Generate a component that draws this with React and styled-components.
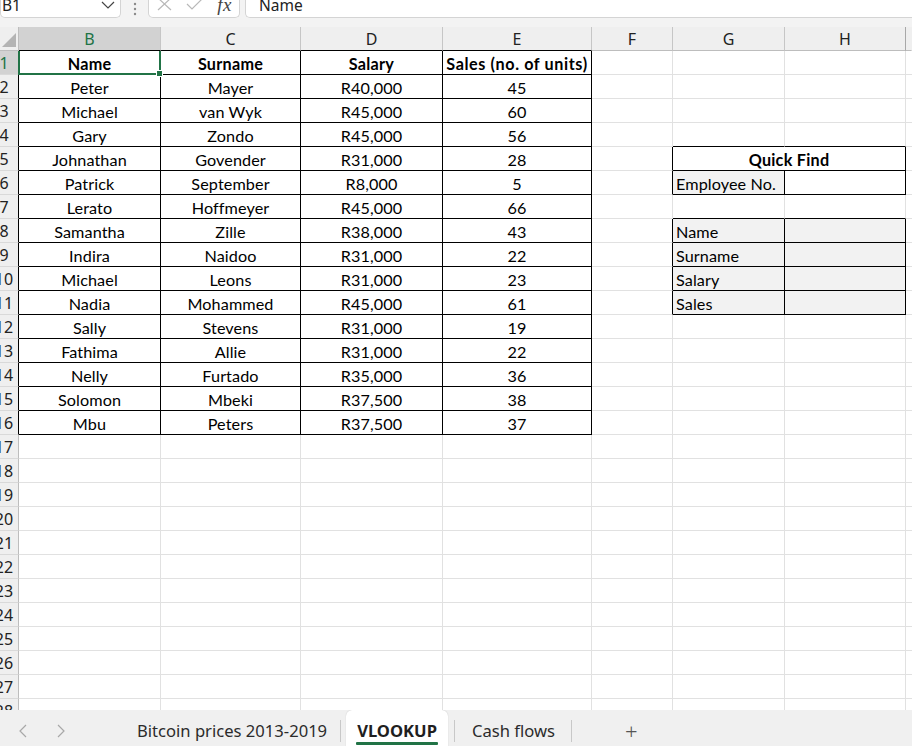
import React from "react";
import styled, { createGlobalStyle } from "styled-components";

const Global = createGlobalStyle`
  html, body { margin: 0; padding: 0; height: 100%; }
  body { background: #f3f3f3; overflow: hidden; }
  #root { height: 100%; }
`;

const COLS = "19px 142px 140px 142px 149px 81px 112px 121px 1fr";
const GRID = "#e1e1e1";
const HEAD_LINE = "#c6c6c6";
const BLACK = "#000";
const GREEN = "#217346";
const FILL = "#f2f2f2";

const data = [
  ["Peter", "Mayer", "R40,000", "45"],
  ["Michael", "van Wyk", "R45,000", "60"],
  ["Gary", "Zondo", "R45,000", "56"],
  ["Johnathan", "Govender", "R31,000", "28"],
  ["Patrick", "September", "R8,000", "5"],
  ["Lerato", "Hoffmeyer", "R45,000", "66"],
  ["Samantha", "Zille", "R38,000", "43"],
  ["Indira", "Naidoo", "R31,000", "22"],
  ["Michael", "Leons", "R31,000", "23"],
  ["Nadia", "Mohammed", "R45,000", "61"],
  ["Sally", "Stevens", "R31,000", "19"],
  ["Fathima", "Allie", "R31,000", "22"],
  ["Nelly", "Furtado", "R35,000", "36"],
  ["Solomon", "Mbeki", "R37,500", "38"],
  ["Mbu", "Peters", "R37,500", "37"],
];

const COL_LETTERS = ["B", "C", "D", "E", "F", "G", "H", ""];
const ROW_COUNT = 28;

function bordered(r, c) {
  if (r >= 1 && r <= 16 && c >= 1 && c <= 4) return true;
  if ((r === 5 || r === 6) && (c === 6 || c === 7)) return true;
  if (r >= 8 && r <= 11 && (c === 6 || c === 7)) return true;
  return false;
}

function cellContent(r, c) {
  if (r === 1) {
    const h = ["Name", "Surname", "Salary", "Sales (no. of units)"];
    if (c >= 1 && c <= 4) return { text: h[c - 1], bold: true, align: "center", wide: c === 4 };
  }
  if (r >= 2 && r <= 16 && c >= 1 && c <= 4) {
    return { text: data[r - 2][c - 1], align: "center" };
  }
  if (r === 5 && c === 6) return { text: "Quick Find", bold: true, align: "center", span: 2 };
  if (r === 6 && c === 6) return { text: "Employee No.", align: "flex-start", fill: true };
  if (r === 6 && c === 7) return { text: "" };
  const labels = { 8: "Name", 9: "Surname", 10: "Salary", 11: "Sales" };
  if (labels[r] && c === 6) return { text: labels[r], align: "flex-start", fill: true };
  if (labels[r] && c === 7) return { text: "", fill: true };
  return { text: "" };
}

const Page = styled.div`
  display: flex;
  flex-direction: column;
  width: 912px;
  height: 746px;
  overflow: hidden;
  background: #f3f3f3;
`;

const FormulaBar = styled.div`
  height: 18px;
  flex-shrink: 0;
  display: flex;
  align-items: flex-end;
  overflow: hidden;
  font-family: "Noto Sans", "Open Sans", sans-serif;
  font-size: 15.5px;
  color: #222;
`;

const Box = styled.div`
  height: 26px;
  box-sizing: border-box;
  background: #fff;
  border: 1px solid #d4d4d4;
  border-top: none;
  border-radius: 0 0 5px 5px;
  display: flex;
  align-items: center;
`;

const NameBox = styled(Box)`
  width: 121px;
  justify-content: space-between;
  padding: 0 5px 0 1px;
`;

const Dots = styled.div`
  width: 27px;
  height: 18px;
  display: flex;
  align-items: center;
  justify-content: center;
`;

const FxBox = styled(Box)`
  width: 92px;
  margin-right: 5px;
  padding: 0 7px 0 8px;
  justify-content: space-between;
`;

const FxText = styled.span`
  font-family: "Liberation Serif", "DejaVu Serif", serif;
  font-style: italic;
  font-size: 19px;
  color: #444;
  letter-spacing: 0.5px;
`;

const FormulaInput = styled(Box)`
  flex: 1;
  padding-left: 13px;
  border-radius: 0 0 0 5px;
  border-right: none;
`;

const Strip = styled.div`
  height: 9px;
  flex-shrink: 0;
  background: #f3f3f3;
`;

const HeaderRow = styled.div`
  display: grid;
  grid-template-columns: ${COLS};
  height: 24px;
  flex-shrink: 0;
  background: #efefef;
`;

const HeadCell = styled.div`
  box-sizing: border-box;
  border-right: 1px solid ${(p) => p.$right || HEAD_LINE};
  border-bottom: 1px solid ${(p) => p.$bottom || "#bdbdbd"};
  background: ${(p) => (p.$selected ? "#d2d2d2" : "#efefef")};
  color: ${(p) => (p.$selected ? GREEN : "#222")};
  font-family: "Noto Sans", "Open Sans", sans-serif;
  font-size: 16px;
  display: flex;
  align-items: center;
  justify-content: center;
  padding-top: 1px;
`;

const Corner = styled(HeadCell)`
  align-items: stretch;
  justify-content: stretch;
  padding: 0;
`;

const Body = styled.div`
  flex: 1;
  overflow: hidden;
  background: #fff;
`;

const Grid = styled.div`
  display: grid;
  grid-template-columns: ${COLS};
  grid-auto-rows: 24px;
`;

const RowHead = styled.div`
  box-sizing: border-box;
  overflow: hidden;
  background: ${(p) => (p.$selected ? "#d2d2d2" : "#efefef")};
  color: ${(p) => (p.$selected ? GREEN : "#222")};
  border-right: 1px solid ${(p) => p.$right};
  border-bottom: 1px solid #d9d9d9;
  font-family: "Noto Sans", "Open Sans", sans-serif;
  font-size: 16px;
  display: flex;
  align-items: center;
  padding-top: 1px;
`;

const RowNum = styled.span`
  flex: 0 0 30px;
  margin-left: -11px;
  text-align: center;
`;

const Cell = styled.div`
  position: relative;
  box-sizing: border-box;
  grid-column: span ${(p) => p.$span || 1};
  border-right: 1px solid ${(p) => p.$right};
  border-bottom: 1px solid ${(p) => p.$bottom};
  background: ${(p) => (p.$fill ? FILL : "#fff")};
  display: flex;
  align-items: flex-end;
  justify-content: ${(p) => p.$align || "flex-start"};
  padding: 0 3px 0;
  font-family: Lato, "Liberation Sans", sans-serif;
  font-size: 16.2px;
  font-weight: ${(p) => (p.$bold ? 700 : 400)};
  letter-spacing: ${(p) => (p.$wide ? "0.6px" : p.$bold ? "0.25px" : "0.1px")};
  color: #000;
  white-space: nowrap;
  line-height: 20px;
`;

const Selection = styled.div`
  position: absolute;
  top: -2px;
  left: -1px;
  right: -1px;
  bottom: -1px;
  border: 2px solid ${GREEN};
  z-index: 2;
  pointer-events: none;
`;

const Handle = styled.div`
  position: absolute;
  right: -4px;
  bottom: -4px;
  width: 5px;
  height: 5px;
  background: ${GREEN};
  border: 1px solid #fff;
`;

const TabBar = styled.div`
  height: 36px;
  flex-shrink: 0;
  background: #f0f0f0;
  display: flex;
  align-items: stretch;
  font-family: "Noto Sans", "Open Sans", sans-serif;
  font-size: 16.6px;
  color: #2b2b2b;
`;

const Nav = styled.div`
  width: 122px;
  display: flex;
  align-items: center;
  padding: 5px 0 0 19px;
  gap: 30px;
  box-sizing: border-box;
`;

const Tab = styled.div`
  display: flex;
  align-items: center;
  padding: 5px ${(p) => p.$pr}px 0 ${(p) => p.$pl}px;
  background: ${(p) => (p.$active ? "#fff" : "transparent")};
  border-radius: ${(p) => (p.$active ? "6px 6px 0 0" : "0")};
  box-shadow: ${(p) => (p.$active ? "0 0 1px rgba(0,0,0,0.25)" : "none")};
  font-weight: ${(p) => (p.$active ? 700 : 400)};
  color: ${(p) => (p.$active ? "#1f1f1f" : "#2b2b2b")};
`;

const TabLabel = styled.span`
  position: relative;
  padding: 0 1px;
`;

const Underline = styled.span`
  position: absolute;
  left: 0;
  right: 0;
  bottom: -3px;
  height: 3px;
  border-radius: 1px;
  background: ${GREEN};
`;

const Sep = styled.div`
  width: 1px;
  align-self: center;
  height: 22px;
  margin-top: 6px;
  background: #c8c8c8;
  margin-left: ${(p) => p.$m ?? 5}px;
  margin-right: ${(p) => p.$m ?? 5}px;
`;

const AddTab = styled.div`
  display: flex;
  align-items: center;
  padding-top: 5px;
  margin-left: 53px;
  font-size: 22px;
  font-weight: 300;
  color: #555;
`;

function Chevron({ dir }) {
  const d = dir === "left" ? "M7 1 L1 7 L7 13" : "M1 1 L7 7 L1 13";
  return (
    <svg width="8" height="14" viewBox="0 0 8 14">
      <path d={d} fill="none" stroke="#a8a8a8" strokeWidth="1.2" />
    </svg>
  );
}

export default function App() {
  const rows = [];
  for (let r = 1; r <= ROW_COUNT; r++) {
    rows.push(
      <RowHead key={`h${r}`} $selected={r === 1} $right={bordered(r, 1) ? BLACK : "#bdbdbd"}>
        <RowNum>{r}</RowNum>
      </RowHead>
    );
    for (let c = 1; c <= 8; c++) {
      if (r === 5 && c === 7) continue;
      const info = cellContent(r, c);
      const span = info.span || 1;
      const lastC = c + span - 1;
      const right = bordered(r, lastC) || bordered(r, lastC + 1) ? BLACK : GRID;
      const bottom = bordered(r, c) || bordered(r + 1, c) ? BLACK : GRID;
      rows.push(
        <Cell
          key={`${r}-${c}`}
          $span={span}
          $right={right}
          $bottom={bottom}
          $fill={info.fill}
          $bold={info.bold}
          $wide={info.wide}
          $align={info.align}
        >
          {info.text}
          {r === 1 && c === 1 && (
            <Selection>
              <Handle />
            </Selection>
          )}
        </Cell>
      );
    }
  }

  return (
    <>
      <Global />
      <Page>
        <FormulaBar>
          <NameBox>
            <span>B1</span>
            <svg width="14" height="8" viewBox="0 0 14 8">
              <path d="M1 1 L7 7 L13 1" fill="none" stroke="#444" strokeWidth="1.2" />
            </svg>
          </NameBox>
          <Dots>
            <svg width="4" height="14" viewBox="0 0 4 14">
              <circle cx="2" cy="2" r="1.2" fill="#8a8a8a" />
              <circle cx="2" cy="7" r="1.2" fill="#8a8a8a" />
              <circle cx="2" cy="12" r="1.2" fill="#8a8a8a" />
            </svg>
          </Dots>
          <FxBox>
            <svg width="15" height="13" viewBox="0 0 15 13">
              <path d="M1 0 L14 12 M14 0 L1 12" stroke="#b8b8b8" strokeWidth="1.2" fill="none" />
            </svg>
            <svg width="17" height="12" viewBox="0 0 17 12">
              <path d="M1 5 L6 10 L16 0" stroke="#b8b8b8" strokeWidth="1.2" fill="none" />
            </svg>
            <FxText>fx</FxText>
          </FxBox>
          <FormulaInput>Name</FormulaInput>
        </FormulaBar>
        <Strip />
        <HeaderRow>
          <Corner $bottom="#bdbdbd" $right="#bdbdbd">
            <svg width="18" height="23" viewBox="0 0 18 23">
              <polygon points="2,20 16,20 16,6" fill="#b4b4b4" />
            </svg>
          </Corner>
          {COL_LETTERS.map((l, i) => (
            <HeadCell
              key={i}
              $selected={i === 0}
              $bottom={bordered(1, i + 1) ? BLACK : "#bdbdbd"}
              $right={i === 7 ? "transparent" : i === 6 ? "#a8a8a8" : HEAD_LINE}
            >
              {l}
            </HeadCell>
          ))}
        </HeaderRow>
        <Body>
          <Grid>{rows}</Grid>
        </Body>
        <TabBar>
          <Nav>
            <Chevron dir="left" />
            <Chevron dir="right" />
          </Nav>
          <Tab $pl={15} $pr={8}>Bitcoin prices 2013-2019</Tab>
          <Sep />
          <Tab $active $pl={10} $pr={10}>
            <TabLabel>
              VLOOKUP
              <Underline />
            </TabLabel>
          </Tab>
          <Sep $m={6} />
          <Tab $pl={11} $pr={16}>Cash flows</Tab>
          <Sep $m={0} />
          <AddTab>+</AddTab>
        </TabBar>
      </Page>
    </>
  );
}
